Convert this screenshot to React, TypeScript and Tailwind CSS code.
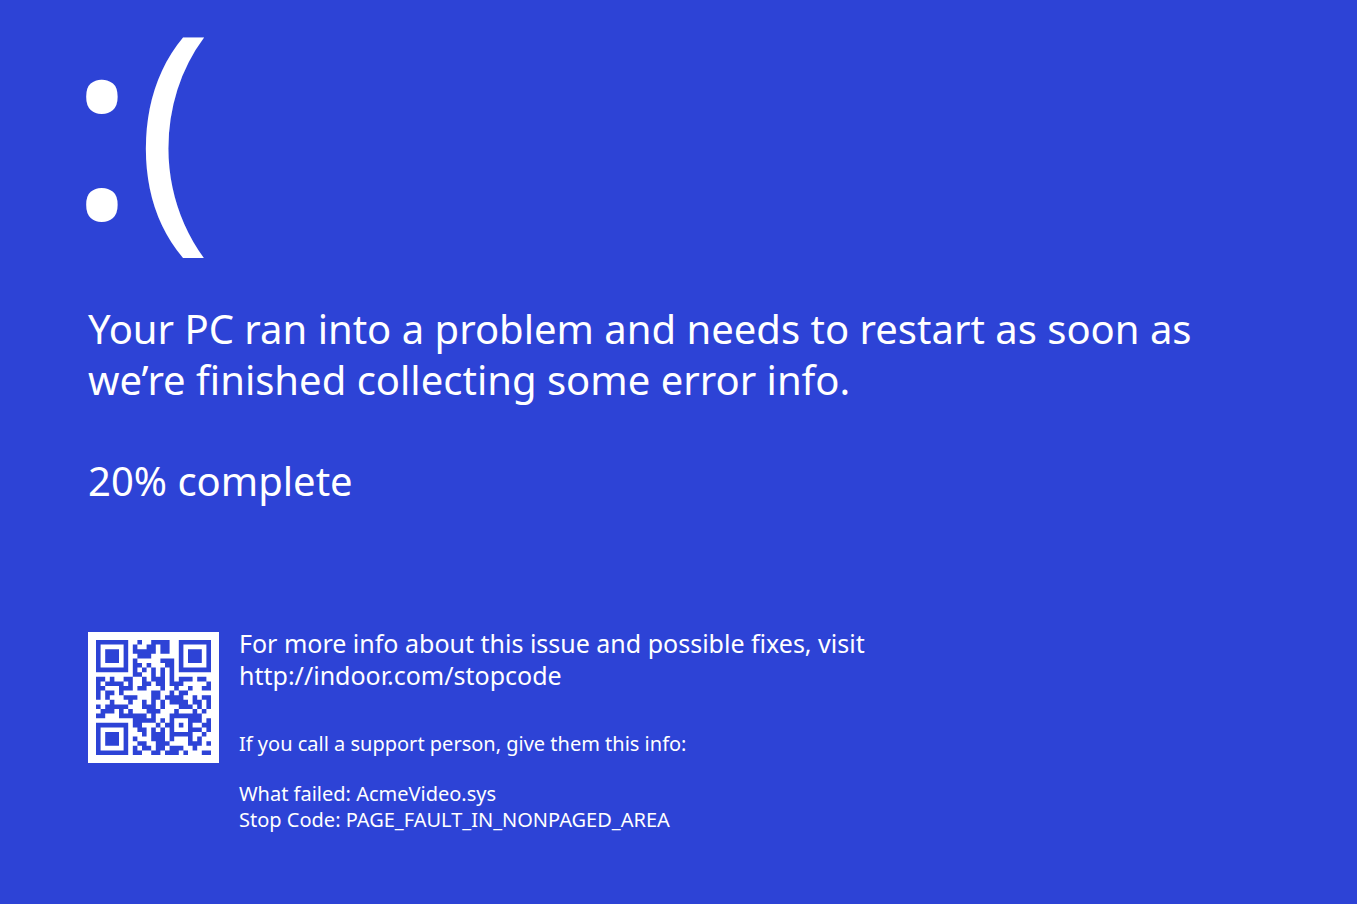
import React from 'react';

const STOP_CODE_URL = 'http://windows.com/stopcode';

const DETAILS = [
  { label: 'What failed', value: 'AcmeVideo.sys' },
  { label: 'Stop Code', value: 'PAGE_FAULT_IN_NONPAGED_AREA' },
];

// QR version 2, error correction L, mask 7
const SIZE = 25;
const DATA_LENGTH = 34;
const ECC_LENGTH = 10;
const FORMAT_BITS = '110100101110110';

function multiply(x: number, y: number) {
  let z = 0;
  for (let i = 7; i >= 0; i--) {
    z = (z << 1) ^ ((z >>> 7) * 0x11d);
    z ^= ((y >>> i) & 1) * x;
  }
  return z;
}

function getCodewords(text: string) {
  let bits = '0100' + text.length.toString(2).padStart(8, '0');
  for (const char of text) {
    bits += char.charCodeAt(0).toString(2).padStart(8, '0');
  }
  bits += '0000';

  const data: number[] = [];
  for (let i = 0; i < bits.length; i += 8) {
    data.push(parseInt(bits.slice(i, i + 8), 2));
  }
  for (let pad = 0xec; data.length < DATA_LENGTH; pad ^= 0xec ^ 0x11) {
    data.push(pad);
  }

  // Reed-Solomon divisor
  const divisor: number[] = new Array(ECC_LENGTH).fill(0);
  divisor[ECC_LENGTH - 1] = 1;
  let root = 1;
  for (let i = 0; i < ECC_LENGTH; i++) {
    for (let j = 0; j < ECC_LENGTH; j++) {
      divisor[j] = multiply(divisor[j], root);
      if (j + 1 < ECC_LENGTH) divisor[j] ^= divisor[j + 1];
    }
    root = multiply(root, 2);
  }

  const ecc: number[] = new Array(ECC_LENGTH).fill(0);
  for (const byte of data) {
    const factor = byte ^ ecc.shift()!;
    ecc.push(0);
    divisor.forEach((d, i) => {
      ecc[i] ^= multiply(d, factor);
    });
  }

  return [...data, ...ecc];
}

function getModules(text: string) {
  const grid: (boolean | null)[][] = Array.from({ length: SIZE }, () => new Array(SIZE).fill(null));

  for (let i = 0; i < SIZE; i++) {
    grid[6][i] = i % 2 === 0;
    grid[i][6] = i % 2 === 0;
  }

  [[3, 3], [3, SIZE - 4], [SIZE - 4, 3]].forEach(([row, col]) => {
    for (let dy = -4; dy <= 4; dy++) {
      for (let dx = -4; dx <= 4; dx++) {
        const y = row + dy;
        const x = col + dx;
        if (y < 0 || x < 0 || y >= SIZE || x >= SIZE) continue;
        const ring = Math.max(Math.abs(dx), Math.abs(dy));
        grid[y][x] = ring !== 2 && ring !== 4;
      }
    }
  });

  for (let dy = -2; dy <= 2; dy++) {
    for (let dx = -2; dx <= 2; dx++) {
      grid[18 + dy][18 + dx] = Math.max(Math.abs(dx), Math.abs(dy)) !== 1;
    }
  }

  const format = [...FORMAT_BITS].map((bit) => bit === '1');
  const near = [0, 1, 2, 3, 4, 5, 7, 8];
  near.forEach((col, i) => {
    grid[8][col] = format[i];
  });
  [7, 5, 4, 3, 2, 1, 0].forEach((row, i) => {
    grid[row][8] = format[8 + i];
  });
  for (let i = 0; i < 7; i++) grid[SIZE - 1 - i][8] = format[i];
  for (let i = 0; i < 8; i++) grid[8][SIZE - 8 + i] = format[7 + i];
  grid[SIZE - 8][8] = true;

  const codewords = getCodewords(text);
  let index = 0;
  let upward = true;
  for (let right = SIZE - 1; right > 0; right -= 2) {
    if (right === 6) right = 5;
    for (let step = 0; step < SIZE; step++) {
      const y = upward ? SIZE - 1 - step : step;
      for (const x of [right, right - 1]) {
        if (grid[y][x] !== null) continue;
        const byte = codewords[index >> 3] ?? 0;
        const bit = ((byte >> (7 - (index & 7))) & 1) === 1;
        const flip = (((x + y) % 2) + ((x * y) % 3)) % 2 === 0;
        grid[y][x] = bit !== flip;
        index++;
      }
    }
    upward = !upward;
  }

  return grid;
}

function QrCode({ value }: { value: string }) {
  const path = getModules(value)
    .flatMap((row, y) => row.map((dark, x) => (dark ? `M${x} ${y}h1v1h-1z` : '')))
    .join('');

  return (
    <div className="w-[131px] shrink-0 bg-white p-2">
      <svg viewBox="0 0 25 25" className="block w-full" role="img" aria-label="QR code">
        <path d={path} fill="#2d43d6" />
      </svg>
    </div>
  );
}

export default function App() {
  return (
    <main className="min-h-screen bg-[#2d43d6] px-[88px] pb-16 font-['Noto_Sans',sans-serif] text-white">
      <div className="-ml-5 text-[253px] leading-[240px]">:(</div>

      <h1 className="mt-[63px] max-w-[1130px] text-[40px] leading-[51px]">
        Your PC ran into a problem and needs to restart as soon as we’re finished collecting some error info.
      </h1>
      <p className="mt-[50px] text-[40px] leading-[51px]">20% complete</p>

      <div className="mt-[126px] flex items-start gap-5">
        <QrCode value={STOP_CODE_URL} />
        <div className="-mt-[5px]">
          <p className="text-[25px] leading-8">
            For more info about this issue and possible fixes, visit
            <br />
            <a href="http://indoor.com/stopcode">http://indoor.com/stopcode</a>
          </p>
          <p className="mt-10 text-xl leading-[26px]">If you call a support person, give them this info:</p>
          <div className="mt-6 text-xl leading-[26px]">
            {DETAILS.map((item) => (
              <p key={item.label}>
                {item.label}: {item.value}
              </p>
            ))}
          </div>
        </div>
      </div>
    </main>
  );
}
